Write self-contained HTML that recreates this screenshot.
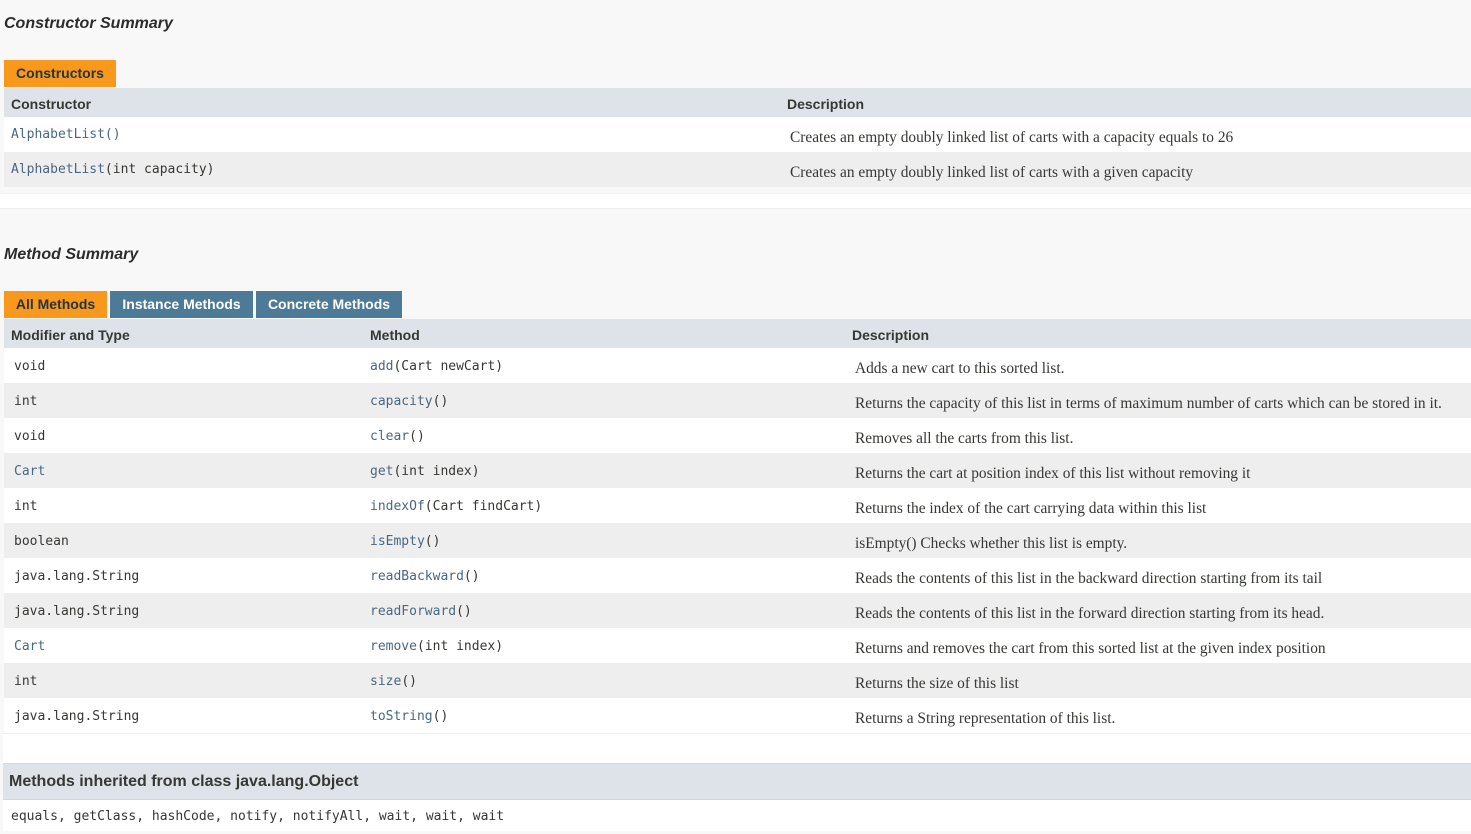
<!DOCTYPE html>
<html><head><meta charset="utf-8"><style>
body{margin:0;width:1471px;height:834px;background:#f8f8f8;position:relative;overflow:hidden;font-family:"Liberation Sans",Arial,sans-serif;color:#353833}
div{position:absolute;box-sizing:border-box}
.h{font-style:italic;font-weight:bold;font-size:16px;color:#2c2c2c;left:4px}
.tab{height:27px;font-weight:bold;font-size:14px;line-height:27px;text-align:center;color:#fff;background:#4d7a97}
.tab.a{background:#f8981d;color:#253441}
.hd{background:#dee3e9;left:4px;right:0;font-size:14px;font-weight:bold}
.hd span,.r span{position:absolute}
.r{left:4px;right:0;height:35px}
.r.w{background:#fff}.r.g{background:#eeeeef}
.m{font-family:"DejaVu Sans Mono","Liberation Mono",monospace;font-size:13px;top:11px}
.r span.i{position:static}
.lk{color:#4a6782}
.d{font-family:"Liberation Serif",serif;font-size:15.4px;top:12px}
</style></head><body>
<div class="h" style="top:15px">Constructor Summary</div>
<div class="tab a" style="left:4px;top:60px;width:112px">Constructors</div>
<div class="hd" style="top:88px;height:29px"><span style="left:7px;top:8px">Constructor</span><span style="left:783px;top:8px">Description</span></div>
<div class="r w" style="top:117px"><span class="m lk" style="left:7px;top:10px">AlphabetList()</span><span class="d" style="left:786px;top:12px">Creates an empty doubly linked list of carts with a capacity equals to 26</span></div>
<div class="r g" style="top:152px"><span class="m" style="left:7px;top:10px"><span class="lk i">AlphabetList</span>(int capacity)</span><span class="d" style="left:786px;top:12px">Creates an empty doubly linked list of carts with a given capacity</span></div>
<div style="left:0;right:0;top:193px;height:16px;background:#fff;border-top:1px solid #eee;border-bottom:1px solid #eee"></div>
<div class="h" style="top:246px">Method Summary</div>
<div class="tab a" style="left:4px;top:291px;width:103px">All Methods</div>
<div class="tab" style="left:110px;top:291px;width:143px">Instance Methods</div>
<div class="tab" style="left:256px;top:291px;width:146px">Concrete Methods</div>
<div class="hd" style="top:319px;height:29px"><span style="left:7px;top:8px">Modifier and Type</span><span style="left:366px;top:8px">Method</span><span style="left:848px;top:8px">Description</span></div>
<div class="r w" style="top:348px"><span class="m" style="left:10px">void</span><span class="m" style="left:366px"><span class="lk i">add</span>(Cart newCart)</span><span class="d" style="left:851px">Adds a new cart to this sorted list.</span></div>
<div class="r g" style="top:383px"><span class="m" style="left:10px">int</span><span class="m" style="left:366px"><span class="lk i">capacity</span>()</span><span class="d" style="left:851px">Returns the capacity of this list in terms of maximum number of carts which can be stored in it.</span></div>
<div class="r w" style="top:418px"><span class="m" style="left:10px">void</span><span class="m" style="left:366px"><span class="lk i">clear</span>()</span><span class="d" style="left:851px">Removes all the carts from this list.</span></div>
<div class="r g" style="top:453px"><span class="m lk" style="left:10px">Cart</span><span class="m" style="left:366px"><span class="lk i">get</span>(int index)</span><span class="d" style="left:851px">Returns the cart at position index of this list without removing it</span></div>
<div class="r w" style="top:488px"><span class="m" style="left:10px">int</span><span class="m" style="left:366px"><span class="lk i">indexOf</span>(Cart findCart)</span><span class="d" style="left:851px">Returns the index of the cart carrying data within this list</span></div>
<div class="r g" style="top:523px"><span class="m" style="left:10px">boolean</span><span class="m" style="left:366px"><span class="lk i">isEmpty</span>()</span><span class="d" style="left:851px">isEmpty() Checks whether this list is empty.</span></div>
<div class="r w" style="top:558px"><span class="m" style="left:10px">java.lang.String</span><span class="m" style="left:366px"><span class="lk i">readBackward</span>()</span><span class="d" style="left:851px">Reads the contents of this list in the backward direction starting from its tail</span></div>
<div class="r g" style="top:593px"><span class="m" style="left:10px">java.lang.String</span><span class="m" style="left:366px"><span class="lk i">readForward</span>()</span><span class="d" style="left:851px">Reads the contents of this list in the forward direction starting from its head.</span></div>
<div class="r w" style="top:628px"><span class="m lk" style="left:10px">Cart</span><span class="m" style="left:366px"><span class="lk i">remove</span>(int index)</span><span class="d" style="left:851px">Returns and removes the cart from this sorted list at the given index position</span></div>
<div class="r g" style="top:663px"><span class="m" style="left:10px">int</span><span class="m" style="left:366px"><span class="lk i">size</span>()</span><span class="d" style="left:851px">Returns the size of this list</span></div>
<div class="r w" style="top:698px"><span class="m" style="left:10px">java.lang.String</span><span class="m" style="left:366px"><span class="lk i">toString</span>()</span><span class="d" style="left:851px">Returns a String representation of this list.</span></div>
<div style="left:3px;right:0;top:733px;height:30px;background:#fff;border-top:1px solid #eee"></div>
<div class="hd" style="top:763px;height:37px;left:3px;font-size:16px;border-top:1px solid #d0d9e0;border-bottom:1px solid #d0d9e0"><span style="left:6px;top:9px">Methods inherited from class java.lang.Object</span></div>
<div style="left:3px;right:0;top:800px;height:31px;background:#fff"><span class="m" style="position:absolute;left:8px;top:9px">equals, getClass, hashCode, notify, notifyAll, wait, wait, wait</span></div>
</body></html>
